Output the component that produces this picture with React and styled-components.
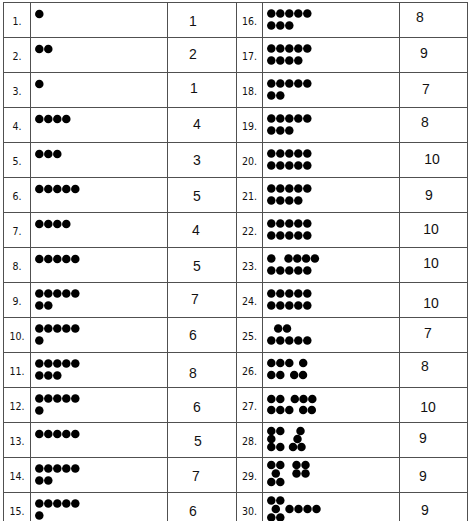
import styled, { createGlobalStyle } from 'styled-components';

const GlobalStyle = createGlobalStyle`
  html, body {
    margin: 0;
    padding: 0;
    background: #fff;
  }
  body {
    font-family: "Liberation Sans", Arial, sans-serif;
  }
`;

const Sheet = styled.div`
  display: grid;
  grid-template-columns: 26px 136px 68px 25px 136px 67px;
  grid-template-rows: repeat(15, 1fr);
  gap: 1px;
  padding: 1px;
  box-sizing: border-box;
  width: 465px;
  height: 519px;
  margin: 2px 0 0 3px;
  background: #505050;
`;

const Cell = styled.div`
  background: #fff;
  overflow: visible;
  min-width: 0;
`;

const NumCell = styled(Cell)`
  font-family: "DejaVu Sans Condensed", "DejaVu Sans", sans-serif;
  font-size: 10.5px;
  line-height: 12px;
  color: #111;
  text-align: center;
  padding-top: 12px;
  box-sizing: border-box;
`;

const Count = styled.span`
  display: block;
  width: max-content;
  margin-left: ${(p) => p.$x - 1}px;
  margin-top: ${(p) => p.$y - 1}px;
  transform: translate(-50%, -50%);
  font-size: 14px;
  line-height: 14px;
  color: #111;
`;

const DotArt = styled.svg`
  display: block;
  width: 136px;
  height: 34px;
  overflow: visible;
`;

const X0 = 9.3;
const P = 9;
const Y1 = 11.5;
const Y2 = 23.5;

const run = (n, y) => Array.from({ length: n }, (_, i) => [X0 + i * P, y]);
const at = (xs, y) => xs.map((x) => [x, y]);
const two = (a, b) => [...run(a, Y1), ...run(b, Y2)];

const items = [
  { dots: run(1, 12), n: 1, x: 26, y: 18.7 },
  { dots: run(2, 12), n: 2, x: 26, y: 17 },
  { dots: run(1, 12), n: 1, x: 27, y: 16 },
  { dots: run(4, 12), n: 4, x: 30, y: 17 },
  { dots: run(3, 12), n: 3, x: 30, y: 18 },
  { dots: run(5, 12), n: 5, x: 30, y: 19 },
  { dots: run(4, 12), n: 4, x: 29, y: 18 },
  { dots: run(5, 12), n: 5, x: 30, y: 19 },
  { dots: two(5, 2), n: 7, x: 28, y: 17 },
  { dots: two(5, 1), n: 6, x: 26, y: 18 },
  { dots: two(5, 3), n: 8, x: 26, y: 21 },
  { dots: two(5, 1), n: 6, x: 30, y: 20 },
  { dots: run(5, 12), n: 5, x: 31, y: 19 },
  { dots: two(5, 2), n: 7, x: 29, y: 19 },
  { dots: two(5, 1), n: 6, x: 26, y: 19 },
  { dots: two(5, 3), n: 8, x: 21, y: 15 },
  { dots: two(5, 4), n: 9, x: 25, y: 16 },
  { dots: two(5, 2), n: 7, x: 27, y: 17 },
  { dots: two(5, 3), n: 8, x: 26, y: 15 },
  { dots: two(5, 5), n: 10, x: 33, y: 17 },
  { dots: two(5, 4), n: 9, x: 30, y: 18 },
  { dots: two(5, 5), n: 10, x: 32, y: 17 },
  {
    dots: [...at([9.3, 26.5, 35.3, 44.1, 52.9], Y1), ...run(5, Y2)],
    n: 10,
    x: 32,
    y: 16,
  },
  { dots: two(5, 5), n: 10, x: 32, y: 21 },
  { dots: [...at([16.2, 25], Y1), ...run(5, Y2)], n: 7, x: 29, y: 16 },
  {
    dots: [...at([9.3, 18.3, 27.3, 41.2], 11), ...at([9.3, 18.3, 32.2, 41], 23)],
    n: 8,
    x: 26,
    y: 14,
  },
  {
    dots: [
      ...at([9.3, 18.3, 32.8, 41.5, 50.3], 12),
      ...at([9.3, 18.3, 27.3, 41.2, 49.8], 23),
    ],
    n: 10,
    x: 29,
    y: 20,
  },
  {
    dots: [
      ...at([9.3, 18.3, 38.5], 9),
      ...at([9.3, 35.5], 17),
      ...at([9.3, 18.3, 31, 39.5], 25),
    ],
    n: 9,
    x: 24,
    y: 16,
  },
  {
    dots: [
      ...at([9.3, 18.3, 34.5, 43.5], 8),
      ...at([13.8, 34.5, 43.5], 16.5),
      ...at([9.3, 18.3], 25),
    ],
    n: 9,
    x: 24,
    y: 19,
  },
  {
    dots: [
      ...at([9.3, 18.3], 8.5),
      ...at([13.8, 27.5, 36.5, 45.5, 54.5], 17),
      ...at([9.3, 18.3], 25.5),
    ],
    n: 9,
    x: 26,
    y: 18,
  },
];

function Dots({ points }) {
  return (
    <DotArt viewBox="0 0 136 34">
      <g transform="translate(-1 -1)">
        {points.map(([cx, cy], i) => (
          <circle key={i} cx={cx} cy={cy} r={4.25} fill="#000" />
        ))}
      </g>
    </DotArt>
  );
}

function Entry({ index }) {
  const item = items[index];
  return (
    <>
      <NumCell>{index + 1}.</NumCell>
      <Cell>
        <Dots points={item.dots} />
      </Cell>
      <Cell>
        <Count $x={item.x} $y={item.y}>
          {item.n}
        </Count>
      </Cell>
    </>
  );
}

function Row({ index }) {
  return (
    <>
      <Entry index={index} />
      <Entry index={index + 15} />
    </>
  );
}

export default function App() {
  return (
    <>
      <GlobalStyle />
      <Sheet>
        {Array.from({ length: 15 }, (_, i) => (
          <Row key={i} index={i} />
        ))}
      </Sheet>
    </>
  );
}
